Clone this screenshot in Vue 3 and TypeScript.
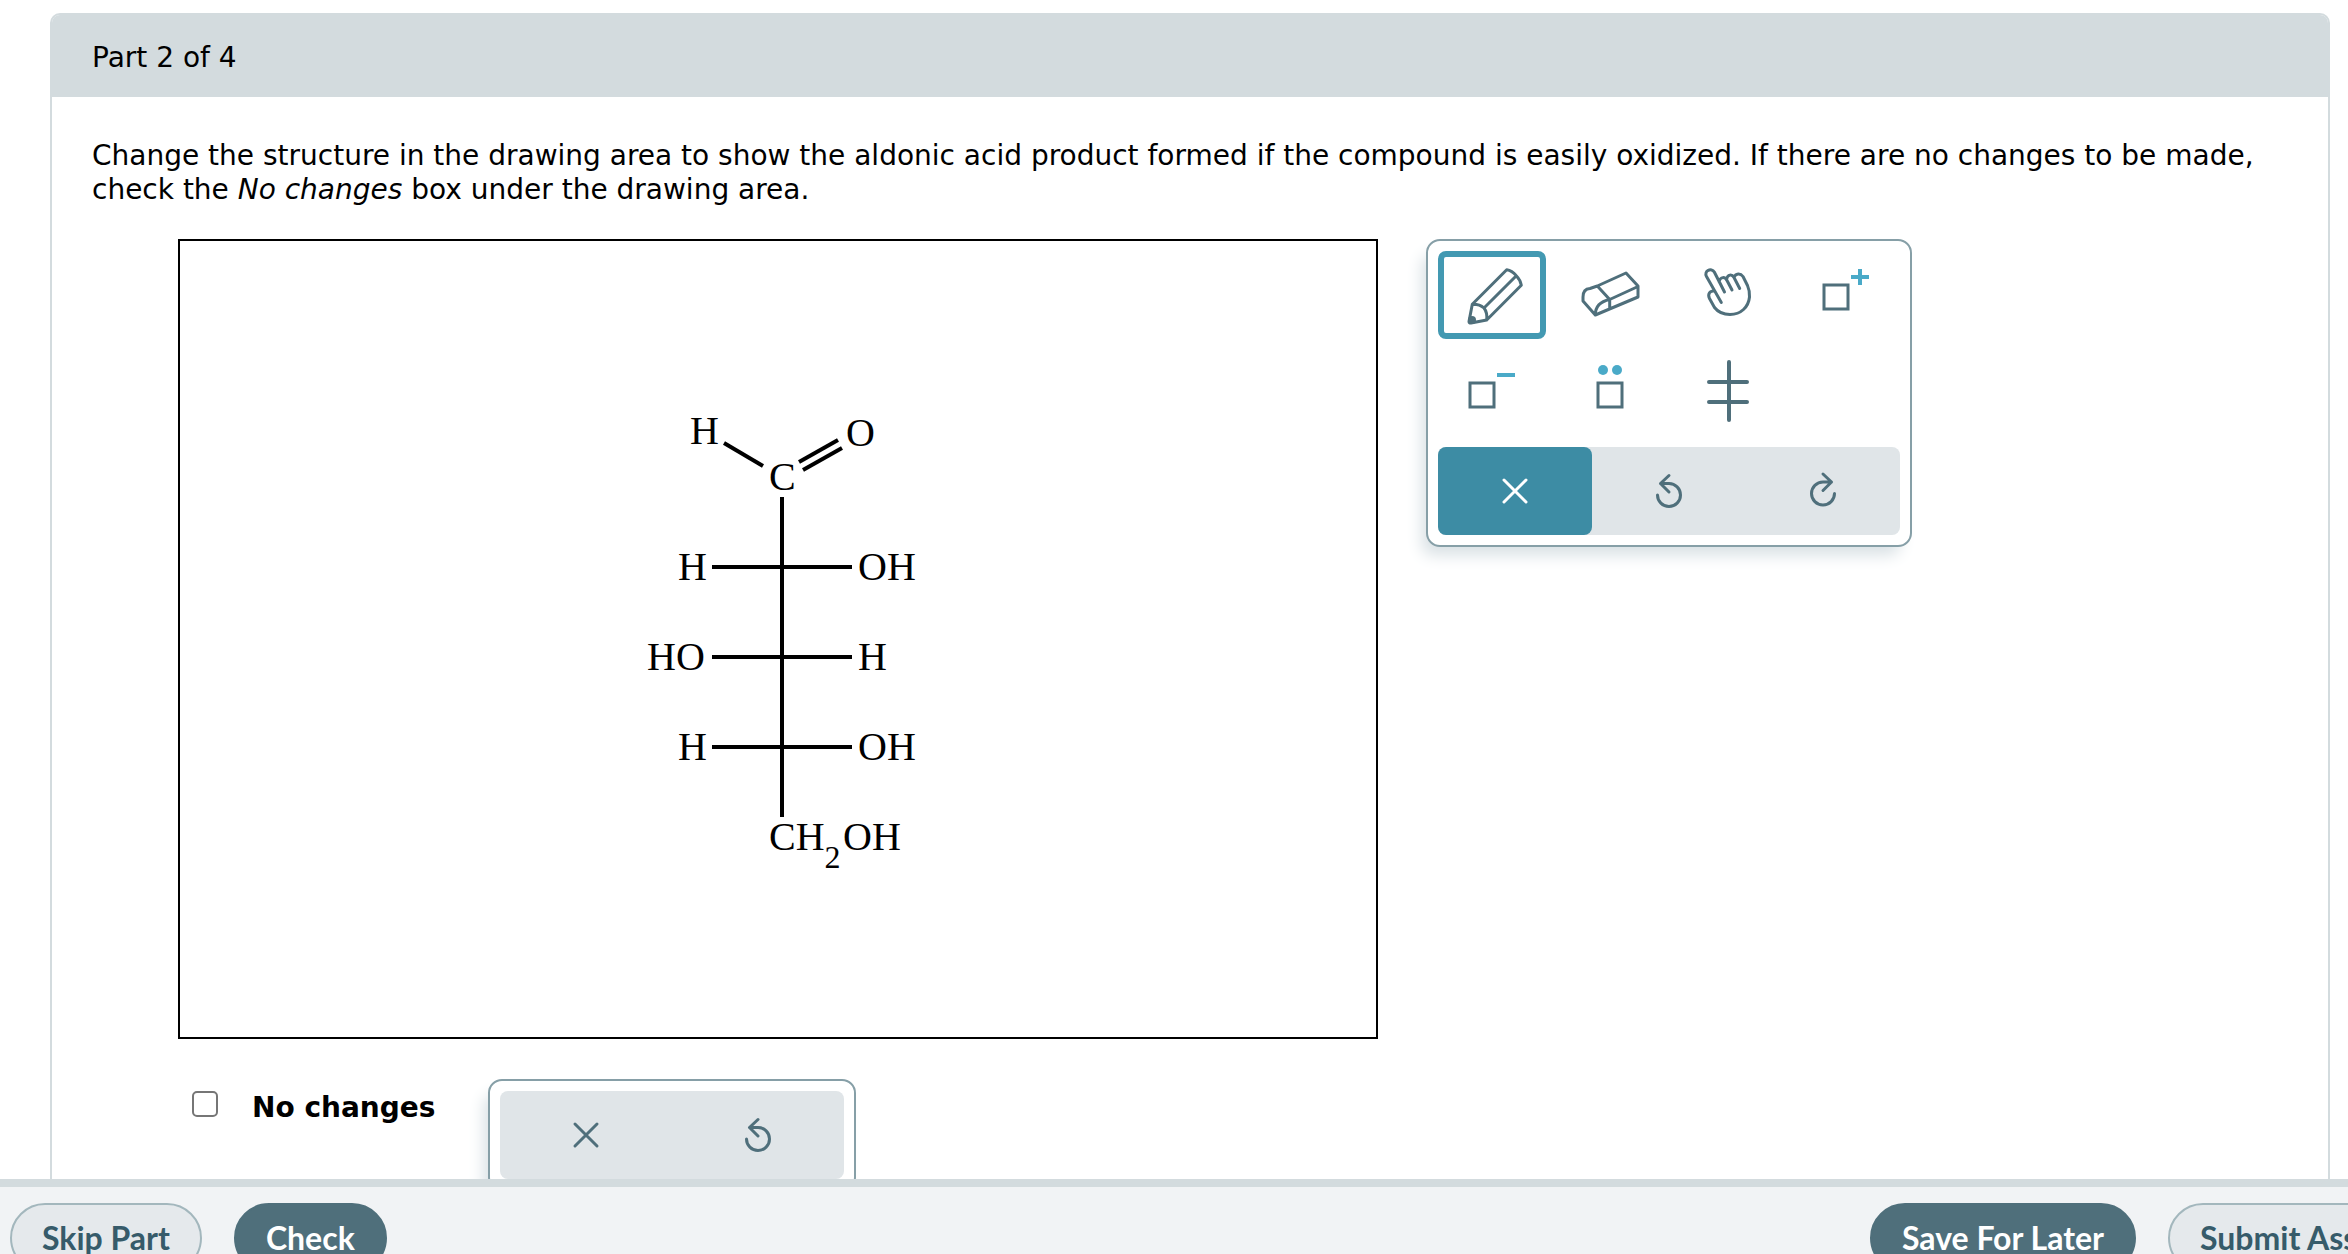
<script setup lang="ts">
import { ref } from 'vue'

type ToolId = 'pencil' | 'eraser' | 'hand' | 'plus' | 'minus' | 'lone-pair' | 'fischer'

interface Tool {
  id: ToolId
  label: string
}

interface AtomLabel {
  x: number
  y: number
  text: string
}

interface Bond {
  x1: number
  y1: number
  x2: number
  y2: number
}

const tools: Tool[] = [
  { id: 'pencil', label: 'Draw' },
  { id: 'eraser', label: 'Erase' },
  { id: 'hand', label: 'Select and move' },
  { id: 'plus', label: 'Add positive charge' },
  { id: 'minus', label: 'Add negative charge' },
  { id: 'lone-pair', label: 'Add lone pair' },
  { id: 'fischer', label: 'Fischer cross' },
]

const activeTool = ref<ToolId>('pencil')
const noChanges = ref(false)

const atoms: AtomLabel[] = [
  { x: 510, y: 203, text: 'H' },
  { x: 666, y: 205, text: 'O' },
  { x: 589, y: 249, text: 'C' },
  { x: 498, y: 339, text: 'H' },
  { x: 678, y: 339, text: 'OH' },
  { x: 467, y: 429, text: 'HO' },
  { x: 678, y: 429, text: 'H' },
  { x: 498, y: 519, text: 'H' },
  { x: 678, y: 519, text: 'OH' },
]

const bonds: Bond[] = [
  { x1: 544, y1: 202, x2: 583, y2: 225 },
  { x1: 619, y1: 221, x2: 658, y2: 199 },
  { x1: 623, y1: 229, x2: 662, y2: 207 },
  { x1: 602, y1: 256, x2: 602, y2: 576 },
  { x1: 532, y1: 326, x2: 672, y2: 326 },
  { x1: 532, y1: 416, x2: 672, y2: 416 },
  { x1: 532, y1: 506, x2: 672, y2: 506 },
]
</script>

<template>
  <div class="page">
    <main class="main">
      <section class="card">
        <header class="card-header">Part 2 of 4</header>
        <div class="card-body">
          <p class="prompt">
            Change the structure in the drawing area to show the aldonic acid product formed if the
            compound is easily oxidized. If there are no changes to be made, check the
            <em>No changes</em> box under the drawing area.
          </p>

          <div class="workspace">
            <div class="canvas">
              <svg viewBox="0 0 1196 796" role="img" aria-label="Fischer projection">
                <g class="bonds">
                  <line v-for="(b, i) in bonds" :key="i" :x1="b.x1" :y1="b.y1" :x2="b.x2" :y2="b.y2" />
                </g>
                <g class="atoms">
                  <text v-for="(a, i) in atoms" :key="i" :x="a.x" :y="a.y">{{ a.text }}</text>
                  <text x="589" y="609">CH<tspan class="subscript" dy="18">2</tspan><tspan x="663" dy="-18">OH</tspan></text>
                </g>
              </svg>
            </div>

            <div class="panel">
              <div class="tools">
                <button
                  v-for="tool in tools"
                  :key="tool.id"
                  type="button"
                  class="tool"
                  :class="{ active: activeTool === tool.id }"
                  :aria-label="tool.label"
                  @click="activeTool = tool.id"
                >
                  <svg viewBox="6 6 96 76" aria-hidden="true">
                    <template v-if="tool.id === 'pencil'">
                      <path d="M68.7 18.7 34.3 53.3 31 70.5Q31 72.3 33 72L48.7 69 83.3 34.3Q82.500 29 78.300 24.700 74 19.500 68.700 18.700ZM78.300 24.700 46 57M34.300 53.300Q41.500 53 46 57 49.500 61.500 48.700 69" />
                      <circle class="solid" cx="34" cy="69" r="4" />
                    </template>
                    <template v-else-if="tool.id === 'eraser'">
                      <path d="M41.300 35 70 22 82 35V46L39.300 64 27 50V46Q27 38 34 37.500ZM41.300 35 53.700 48.500 82 35.500M53.700 48.500V58M53.700 48.500C44 50.500 39.300 55 39.300 64" />
                    </template>
                    <template v-else-if="tool.id === 'hand'">
                      <path d="M47.300 51.500 32.500 25.500C29.500 19.500 37.500 16.500 40.300 21L50.500 41M45 30.500C46.500 25.500 51 25.500 53 29.500L58 39M52.500 28.500C53.500 23 58 23 60 26.500L65.700 37.500M60 26.500C61.500 22 66.500 22 69 25.500L73.500 34.500C75.300 38.500 75.700 42 75.500 46 74.500 56 67 63.500 56 63.500 49 63.500 44 61 40.500 56.500L35.500 47.500C33.500 43.500 35.500 39.500 40.500 40" />
                    </template>
                    <template v-else-if="tool.id === 'plus'">
                      <rect x="32" y="34" width="24" height="24" />
                      <path class="accent" d="M59 26H77M68 18V34" />
                    </template>
                    <template v-else-if="tool.id === 'minus'">
                      <rect x="32" y="36" width="24" height="24" />
                      <path class="accent" d="M59 28H77" />
                    </template>
                    <template v-else-if="tool.id === 'lone-pair'">
                      <rect x="42" y="36" width="24" height="24" />
                      <circle class="dot" cx="47" cy="23" r="5" />
                      <circle class="dot" cx="61" cy="23" r="5" />
                    </template>
                    <path v-else class="cross" d="M55 15V73M35 35H73M35 55H73" />
                  </svg>
                </button>
              </div>
              <div class="actions">
                <button type="button" class="action primary" aria-label="Clear drawing">
                  <svg viewBox="0 0 40 40" aria-hidden="true"><path d="M9 9 31 31M31 9 9 31" /></svg>
                </button>
                <button type="button" class="action" aria-label="Undo">
                  <svg viewBox="0 0 40 40" aria-hidden="true">
                    <path d="M8.500 24A11.500 11.500 0 1 0 20 12.500H11.500M20 4.500 11.500 12.500 20 21" />
                  </svg>
                </button>
                <button type="button" class="action" aria-label="Redo">
                  <svg viewBox="0 0 40 40" aria-hidden="true">
                    <path d="M31.500 22.500A11.500 11.500 0 1 1 20 11H28.500M20 3 28.500 11 20 19.500" />
                  </svg>
                </button>
              </div>
            </div>
          </div>

          <div class="answer-row">
            <label class="no-changes">
              <input v-model="noChanges" type="checkbox" />
              <span>No changes</span>
            </label>
            <div class="panel small">
              <div class="actions">
                <button type="button" class="action" aria-label="Clear answer">
                  <svg viewBox="0 0 40 40" aria-hidden="true"><path d="M9 9 31 31M31 9 9 31" /></svg>
                </button>
                <button type="button" class="action" aria-label="Undo answer">
                  <svg viewBox="0 0 40 40" aria-hidden="true">
                    <path d="M8.500 24A11.500 11.500 0 1 0 20 12.500H11.500M20 4.500 11.500 12.500 20 21" />
                  </svg>
                </button>
              </div>
            </div>
          </div>
        </div>
      </section>
    </main>

    <footer class="footer">
      <button type="button" class="pill light">Skip Part</button>
      <button type="button" class="pill dark">Check</button>
      <div class="footer-end">
        <button type="button" class="pill dark">Save For Later</button>
        <button type="button" class="pill light submit">Submit Assignment</button>
      </div>
    </footer>
  </div>
</template>

<style>
body {
  margin: 0;
  background: #fff;
}
</style>

<style scoped>
* {
  box-sizing: border-box;
}

.page {
  display: grid;
  grid-template-rows: minmax(0, 1fr) 75px;
  height: 100vh;
  overflow: hidden;
  color: #000;
  font-family: Verdana, 'DejaVu Sans', sans-serif;
  font-size: 28px;
  line-height: 34px;
}

.main {
  overflow: hidden;
  padding: 13px 18px 0 50px;
}

.card {
  border: 2px solid #d3dbde;
  border-radius: 10px 10px 0 0;
}

.card-header {
  padding: 26px 40px 22px;
  background: #d3dbde;
  border-radius: 8px 8px 0 0;
}

.card-body {
  padding: 42px 40px;
}

.prompt {
  margin: 0 0 32px;
}

.workspace {
  display: flex;
  align-items: flex-start;
  gap: 48px;
  margin-left: 86px;
}

.canvas {
  flex: 0 1 1200px;
  border: 2px solid #000;
}

.canvas svg {
  display: block;
  width: 100%;
}

.bonds {
  stroke: #000;
  stroke-width: 4;
}

.atoms {
  font-family: 'Liberation Serif', 'Times New Roman', serif;
  font-size: 40px;
}

.subscript {
  font-size: 32px;
}

.panel {
  flex: none;
  padding: 10px;
  background: #fff;
  border: 2px solid #869fa7;
  border-radius: 14px;
  box-shadow: -8px 12px 16px -4px #d8e0e4;
}

.tools {
  display: grid;
  grid-template-columns: repeat(4, 108px);
  gap: 8px 10px;
  margin-bottom: 12px;
}

.tool {
  height: 88px;
  padding: 0;
  background: none;
  border: 6px solid transparent;
  border-radius: 8px;
}

.tool.active {
  border-color: #4399b2;
}

.tool svg {
  display: block;
  width: 96px;
  height: 76px;
  fill: none;
  stroke: #4f6f7b;
  stroke-width: 3;
  stroke-linejoin: round;
  stroke-linecap: round;
}

.tool rect {
  stroke-linejoin: miter;
}

.tool .solid {
  fill: #4f6f7b;
  stroke: none;
}

.tool .accent {
  stroke: #4aaac8;
  stroke-width: 4;
  stroke-linecap: butt;
}

.tool .dot {
  fill: #4aaac8;
  stroke: none;
}

.tool .cross {
  stroke-width: 4;
}

.actions {
  display: flex;
  background: #e0e5e8;
  border-radius: 8px;
}

.action {
  display: flex;
  flex: 1;
  align-items: center;
  justify-content: center;
  height: 88px;
  padding: 0;
  color: #4f6f7b;
  background: none;
  border: 0;
  border-radius: 8px;
}

.action.primary {
  color: #fff;
  background: #3d8ca4;
}

.action svg {
  width: 40px;
  height: 40px;
  fill: none;
  stroke: currentColor;
  stroke-width: 3;
  stroke-linecap: round;
  stroke-linejoin: round;
}

.answer-row {
  display: flex;
  align-items: flex-start;
  margin: 40px 0 0 86px;
}

.no-changes {
  display: flex;
  align-items: flex-start;
  gap: 34px;
  width: 310px;
  padding: 12px 0 0 14px;
  font-weight: 700;
}

.no-changes input {
  appearance: none;
  width: 26px;
  height: 26px;
  margin: 0;
  background: #fff;
  border: 2px solid #767676;
  border-radius: 5px;
}

.no-changes input:checked {
  background: #3d8ca4;
}

.panel.small {
  width: 368px;
}

.footer {
  display: flex;
  align-items: flex-start;
  gap: 32px;
  overflow: hidden;
  padding: 16px 0 0 10px;
  background: #f1f3f5;
  border-top: 8px solid #d3dbde;
}

.footer-end {
  display: flex;
  gap: 32px;
  margin: 0 -110px 0 auto;
}

.pill {
  height: 70px;
  padding: 0 30px;
  border: 2px solid #4f6f7b;
  border-radius: 36px;
  font-family: Lato, sans-serif;
  font-size: 32px;
  font-weight: 700;
  line-height: 34px;
  white-space: nowrap;
}

.pill.light {
  color: #365b6a;
  background: #e5e9ec;
  border-color: #a3b7bd;
}

.pill.dark {
  color: #fff;
  background: #4f6f7b;
}

.pill.submit {
  width: 290px;
  text-align: left;
}
</style>
